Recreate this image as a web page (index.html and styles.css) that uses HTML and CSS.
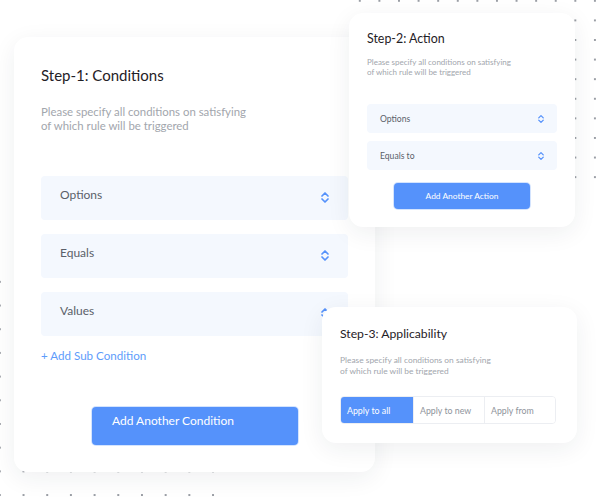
FILE: index.html
```html
<!DOCTYPE html>
<html lang="en">
<head>
    <meta charset="UTF-8">
    <meta name="viewport" content="width=device-width, initial-scale=1.0">
    <title>Rule Builder</title>
    <link rel="stylesheet" href="styles.css">
</head>
<body>

    <div class="stage">
        <!-- decorative dot grids -->
        <div class="dots dots-top"></div>
        <div class="dots dots-bottom"></div>

        <!-- Step 1 -->
        <section class="card card-conditions">
            <h2 class="card-title">Step-1: Conditions</h2>
            <p class="card-text">Please specify all conditions on satisfying<br>of which rule will be triggered</p>

            <div class="field-list">
                <div class="field">
                    <span>Options</span>
                    <svg class="chevrons" width="8" height="13" viewBox="0 0 8 13"><path d="M1 5 L4 2 L7 5 M1 8 L4 11 L7 8" /></svg>
                </div>
                <div class="field">
                    <span>Equals</span>
                    <svg class="chevrons" width="8" height="13" viewBox="0 0 8 13"><path d="M1 5 L4 2 L7 5 M1 8 L4 11 L7 8" /></svg>
                </div>
                <div class="field">
                    <span>Values</span>
                    <svg class="chevrons" width="8" height="13" viewBox="0 0 8 13"><path d="M1 5 L4 2 L7 5 M1 8 L4 11 L7 8" /></svg>
                </div>
            </div>

            <a href="#" class="add-link">+ Add Sub Condition</a>

            <button type="button" class="btn btn-condition">Add Another Condition</button>
        </section>

        <!-- Step 2 -->
        <section class="card card-action">
            <h2 class="card-title">Step-2: Action</h2>
            <p class="card-text">Please specify all conditions on satisfying<br>of which rule will be triggered</p>

            <div class="field-list">
                <div class="field">
                    <span>Options</span>
                    <svg class="chevrons" width="6" height="10" viewBox="0 0 8 13"><path d="M1 5 L4 2 L7 5 M1 8 L4 11 L7 8" /></svg>
                </div>
                <div class="field">
                    <span>Equals to</span>
                    <svg class="chevrons" width="6" height="10" viewBox="0 0 8 13"><path d="M1 5 L4 2 L7 5 M1 8 L4 11 L7 8" /></svg>
                </div>
            </div>

            <button type="button" class="btn btn-action">Add Another Action</button>
        </section>

        <!-- Step 3 -->
        <section class="card card-apply">
            <h2 class="card-title">Step-3: Applicability</h2>
            <p class="card-text">Please specify all conditions on satisfying<br>of which rule will be triggered</p>

            <div class="segments">
                <button type="button" class="segment active">Apply to all</button>
                <button type="button" class="segment">Apply to new</button>
                <button type="button" class="segment">Apply from</button>
            </div>
        </section>
    </div>

</body>
</html>
```

FILE: styles.css
```css
/* General */
body {
    font-family: 'Lato', 'Noto Sans', sans-serif;
    background-color: #fff;
    color: #222;
    margin: 0;
    padding: 0;
}

.stage {
    position: relative;
    width: 596px;
    height: 498px;
    overflow: hidden;
    padding: 37px 0 0 14px;
    box-sizing: border-box;
}

/* Dot grids in the background */
.dots {
    position: absolute;
    background-image: radial-gradient(circle, #9a9ea5 1px, transparent 1.4px);
}

.dots-top {
    left: 350px;
    top: -9px;
    width: 255px;
    height: 196px;
    background-size: 19.6px 19.6px;
}

.dots-bottom {
    left: -12px;
    top: 270px;
    width: 237px;
    height: 237px;
    background-size: 23.7px 23.7px;
}

/* Cards */
.card {
    position: relative;
    background-color: #fff;
    border-radius: 14px;
    box-shadow: 0 6px 24px rgba(30, 40, 60, 0.07);
    box-sizing: border-box;
}

.card-title {
    margin: 0;
    font-weight: 400;
    color: #1f2126;
}

.card-text {
    margin: 0;
    color: #a2a6ad;
}

.field-list {
    display: flex;
    flex-direction: column;
}

.field {
    display: flex;
    justify-content: space-between;
    background-color: #f4f8fe;
    border-radius: 4px;
    color: #5a5f69;
    box-sizing: border-box;
}

.chevrons {
    flex-shrink: 0;
}

.chevrons path {
    fill: none;
    stroke: #5592fb;
    stroke-width: 1.7;
    stroke-linecap: round;
    stroke-linejoin: round;
}

.btn {
    display: block;
    background-color: #5592fb;
    color: #fff;
    border: none;
    border-radius: 4px;
    font-family: inherit;
    cursor: pointer;
    box-shadow: 0 0 0 1px rgba(85, 146, 251, 0.25);
}

/* Step 1 */
.card-conditions {
    width: 361px;
    height: 435px;
    padding: 28px 27px 0;
}

.card-conditions .card-title {
    font-size: 15px;
    line-height: 20px;
}

.card-conditions .card-text {
    font-size: 11.4px;
    line-height: 14px;
    margin-top: 20px;
}

.card-conditions .field-list {
    gap: 14px;
    margin-top: 43px;
}

.card-conditions .field {
    height: 44px;
    padding: 12px 19px 0 19px;
    font-size: 12px;
    line-height: 14px;
}

.card-conditions .chevrons {
    margin-top: 3px;
}

.add-link {
    display: block;
    margin-top: 13px;
    font-size: 11.6px;
    line-height: 14px;
    color: #5e9cfb;
    text-decoration: none;
}

.btn-condition {
    width: 206px;
    height: 38px;
    margin: 44px 0 0 51px;
    padding: 0 20px 10px;
    font-size: 12px;
    line-height: 14px;
    text-align: left;
}

/* Step 2 */
.card-action {
    position: absolute;
    left: 349px;
    top: 13px;
    width: 226px;
    height: 214px;
    padding: 18px 18px 0;
}

.card-action .card-title {
    font-size: 12.4px;
    line-height: 16px;
}

.card-action .card-text {
    font-size: 8px;
    line-height: 10px;
    margin-top: 10px;
}

.card-action .field-list {
    gap: 8px;
    margin-top: 27px;
}

.card-action .field {
    height: 29px;
    align-items: center;
    padding: 0 13px 0 13px;
    font-size: 8.6px;
}

.btn-action {
    width: 136px;
    height: 26px;
    margin: 13px auto 0;
    font-size: 8.4px;
    text-align: center;
}

/* Step 3 */
.card-apply {
    position: absolute;
    left: 322px;
    top: 307px;
    width: 255px;
    height: 136px;
    padding: 19px 18px 0;
}

.card-apply .card-title {
    font-size: 12.2px;
    line-height: 16px;
}

.card-apply .card-text {
    font-size: 8.4px;
    line-height: 11px;
    margin-top: 13px;
}

.segments {
    display: flex;
    width: 216px;
    height: 28px;
    margin-top: 19px;
    border: 1px solid #eceef2;
    border-radius: 4px;
    box-sizing: border-box;
    overflow: hidden;
}

.segment {
    flex: 1;
    border: none;
    border-left: 1px solid #eceef2;
    background-color: #fff;
    color: #8f949c;
    font-family: inherit;
    font-size: 8.8px;
    text-align: left;
    padding: 0 0 0 6px;
    cursor: pointer;
}

.segment:first-child {
    border-left: none;
    flex: 0 0 72px;
}

.segment.active {
    background-color: #5592fb;
    color: #fff;
}
```
